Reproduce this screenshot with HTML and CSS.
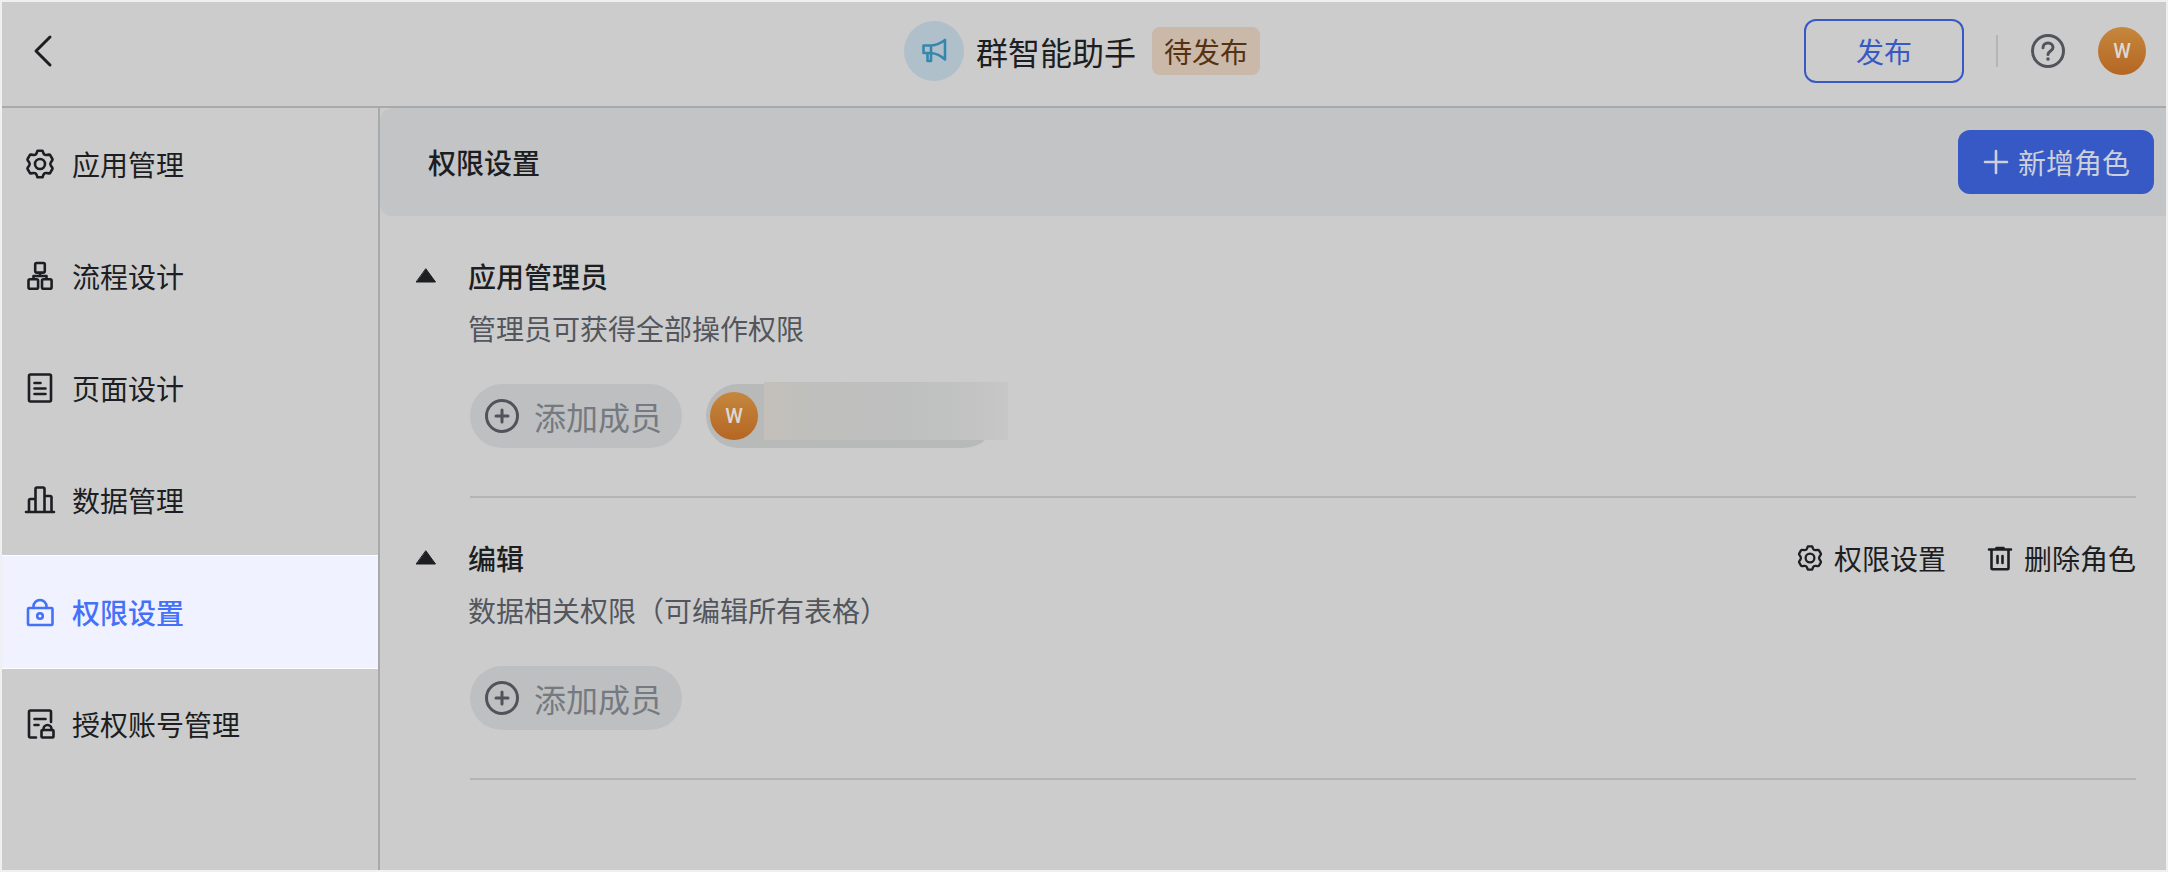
FILE: index.html
```html
<!DOCTYPE html>
<html lang="zh-CN">
<head>
<meta charset="utf-8">
<title>群智能助手</title>
<link rel="stylesheet" href="styles.css">
</head>
<body>
<svg class="sprite" aria-hidden="true">
  <symbol id="gear" viewBox="0 0 28 28">
    <path d="M11.500 .8h5l1 2.600Q18.300 5.200 20.200 5L23 4.600q.8-.1 1.300.7L26.400 9q.4.700-.2 1.500l-1.300 1.800q-1.200 1.700 0 3.400l1.300 1.800q.6.800.2 1.500l-2.100 3.700q-.5.800-1.300.7L20.200 23q-1.900-.2-2.700 1.600l-1 2.600h-5l-1-2.600Q9.700 22.800 7.800 23L5 23.400q-.8.100-1.300-.7L1.600 19q-.4-.7.2-1.500l1.300-1.800q1.200-1.700 0-3.400L1.800 10.500Q1.200 9.700 1.600 9l2.100-3.700q.5-.8 1.300-.7L7.800 5q1.900.2 2.700-1.600z"/>
    <circle cx="14" cy="14" r="5"/>
  </symbol>
  <symbol id="plus-circle" viewBox="0 0 36 36">
    <circle cx="18" cy="18" r="15.500"/><path d="M18 12v12M12 18h12"/>
  </symbol>
</svg>
<div class="app">
  <header class="topbar">
    <button class="back" type="button" aria-label="返回">
      <svg viewBox="0 0 36 36"><path d="M32 4 18 18l14 14"/></svg>
    </button>
    <div class="app-title">
      <span class="app-logo"><svg viewBox="0 0 28 28"><path d="M11 8.500Q18.500 8 25 3v19.500Q18.500 16.500 11 16M11 8.500H3.500V16H11zM7.500 16v8H11v-8"/></svg></span>
      <h1 class="app-name">群智能助手</h1>
      <span class="badge">待发布</span>
    </div>
    <div class="tools">
      <button class="publish" type="button">发布</button>
      <span class="separator"></span>
      <button class="help" type="button" aria-label="帮助">
        <svg viewBox="0 0 36 36"><circle cx="18" cy="18" r="15.500"/><path d="M13 14.800c0-2.900 2-4.800 5-4.800s5 1.900 5 4.400c0 3.600-5 3.600-5 7.100"/><circle class="dot" cx="18" cy="26" r="1.800"/></svg>
      </button>
      <span class="avatar">W</span>
    </div>
  </header>
  <div class="workspace">
    <nav class="sidebar">
      <a class="nav-item" href="#app"><svg viewBox="0 0 28 28"><use href="#gear"/></svg>应用管理</a>
      <a class="nav-item" href="#flow"><svg viewBox="0 0 28 28"><rect x="9.200" y="1" width="9.600" height="9.600" rx="1.500"/><rect x="2.500" y="17.200" width="9.600" height="9.600" rx="1.500"/><rect x="16" y="17.200" width="9.600" height="9.600" rx="1.500"/><path d="M14 11v3M7.500 16.500V14h13v2.500"/></svg>流程设计</a>
      <a class="nav-item" href="#page"><svg viewBox="0 0 28 28"><rect x="3" y="0.500" width="22" height="27" rx="1.500"/><path d="M8.500 9h6M8.500 14.500h11M8.500 20h11"/></svg>页面设计</a>
      <a class="nav-item" href="#data"><svg viewBox="0 0 28 28"><path d="M0 26h28M3 26V14.500q0-1.500 1.500-1.500H9.500M9.500 26V3q0-1.500 1.500-1.500h6q1.500 0 1.500 1.500v23M18.500 10H24q1.500 0 1.500 1.500V26"/></svg>数据管理</a>
      <a class="nav-item active" href="#permission" aria-current="page"><svg viewBox="0 0 28 28"><rect x="2" y="10" width="24.500" height="17" rx="1"/><path d="M7.500 10V8.500a6.500 6.500 0 0 1 13 0V10"/><circle cx="14" cy="18" r="2.800"/></svg>权限设置</a>
      <a class="nav-item" href="#account"><svg viewBox="0 0 28 28"><path d="M25 12V2q0-1.500-1.500-1.500h-19Q3 .5 3 2v24q0 1.500 1.500 1.500H10M8.500 9h11M8.500 15h4"/><rect x="15.500" y="20" width="12" height="7.500" rx="1"/><path d="M17.500 20v-1a4 4 0 0 1 8 0v1"/></svg>授权账号管理</a>
    </nav>
    <main class="content">
      <div class="content-head">
        <h2 class="heading">权限设置</h2>
        <button class="primary" type="button"><svg viewBox="0 0 28 28"><path d="M14 3v22M3 14h22"/></svg>新增角色</button>
      </div>
      <section class="role">
        <div class="role-head">
          <button class="toggle" type="button" aria-label="收起"><svg viewBox="0 0 20 20"><path d="M10 3 19.500 16H.5z"/></svg></button>
          <h3 class="heading">应用管理员</h3>
        </div>
        <p class="role-desc">管理员可获得全部操作权限</p>
        <div class="members">
          <button class="add" type="button"><svg viewBox="0 0 36 36"><use href="#plus-circle"/></svg>添加成员</button>
          <div class="member"><span class="avatar">W</span><span class="mask"></span></div>
        </div>
      </section>
      <section class="role">
        <div class="role-head">
          <button class="toggle" type="button" aria-label="收起"><svg viewBox="0 0 20 20"><path d="M10 3 19.500 16H.5z"/></svg></button>
          <h3 class="heading">编辑</h3>
          <div class="actions">
            <button class="action" type="button"><svg viewBox="-2 -2 32 32"><use href="#gear" width="28" height="28"/></svg>权限设置</button>
            <button class="action" type="button"><svg viewBox="0 0 28 28"><path d="M3 5.500h22M5.500 5.500V24q0 1.200 1.200 1.200h14.600q1.200 0 1.200-1.200V5.500M11.500 12v7M16.500 12v7M10.500 4h7"/></svg>删除角色</button>
          </div>
        </div>
        <p class="role-desc">数据相关权限（可编辑所有表格）</p>
        <div class="members">
          <button class="add" type="button"><svg viewBox="0 0 36 36"><use href="#plus-circle"/></svg>添加成员</button>
        </div>
      </section>
    </main>
  </div>
</div>
</body>
</html>
```
FILE: styles.css
```css
* { box-sizing: border-box; }

body {
  margin: 0;
  min-height: 100vh;
  display: flex;
  background: #f0f0f0;
  color: #1c1e22;
  font: 28px/40px "Noto Sans CJK SC", sans-serif;
}

h1, h2, h3, p { margin: 0; }

button {
  margin: 0;
  padding: 0;
  border: 0;
  background: none;
  color: inherit;
  font: inherit;
  cursor: pointer;
}

svg {
  display: block;
  flex: none;
  width: 28px;
  height: 28px;
  fill: none;
  stroke: currentColor;
  stroke-width: 2.6;
  stroke-linecap: round;
  stroke-linejoin: round;
  overflow: visible;
}

.sprite { position: absolute; width: 0; height: 0; }
symbol { overflow: visible; }

.app {
  flex: 1;
  margin: 2px;
  display: flex;
  flex-direction: column;
  background: #ccc;
}

.topbar {
  display: grid;
  grid-template-columns: 1fr auto 1fr;
  align-items: center;
  padding: 17px 20px 23px 16px;
  border-bottom: 2px solid #a8a9aa;
}

.back { justify-self: start; }
.back svg { width: 36px; height: 36px; }

.app-title { display: flex; align-items: center; }

.app-logo {
  display: grid;
  place-items: center;
  width: 60px;
  height: 60px;
  margin-right: 12px;
  border-radius: 50%;
  background: #b0c0ca;
  color: #3787ad;
}

.app-name { font-size: 32px; font-weight: 400; }

.badge {
  margin-left: 16px;
  padding: 4px 12px;
  border-radius: 8px;
  background: #cab8a9;
  color: #573211;
}

.tools {
  display: flex;
  justify-content: flex-end;
  align-items: center;
  gap: 32px;
}

.publish {
  width: 160px;
  height: 64px;
  border: 2px solid #3759c5;
  border-radius: 12px;
  color: #3759c5;
}

.separator { width: 2px; height: 32px; background: #b4b5b7; }

.help { color: #51545a; }

.back svg, .help svg, .add svg {
  width: 36px;
  height: 36px;
  stroke-width: 3;
}

.help .dot { fill: currentColor; stroke: none; }

.avatar {
  width: 48px;
  height: 48px;
  border-radius: 50%;
  background: linear-gradient(#c5873d, #b56623);
  color: #dcd8d3;
  font: 500 20px/48px Roboto, sans-serif;
  text-align: center;
}

.workspace { flex: 1; display: flex; }

.sidebar {
  flex: none;
  width: 378px;
  border-right: 2px solid #a8a9aa;
}

.nav-item {
  display: flex;
  align-items: center;
  gap: 18px;
  height: 112px;
  padding-left: 24px;
  color: inherit;
  text-decoration: none;
}

.nav-item.active {
  background: #f0f3ff;
  box-shadow: 0 -1px #fff, 0 1px #fff;
  color: #4571f8;
  font-weight: 500;
}

.content { flex: 1; }

.content-head {
  display: flex;
  align-items: center;
  justify-content: space-between;
  padding: 22px 12px 22px 48px;
  border-radius: 12px 0 0 12px;
  background: #c3c4c6;
}

.heading { font-size: 28px; font-weight: 500; }

.primary {
  display: flex;
  align-items: center;
  gap: 8px;
  height: 64px;
  padding: 0 24px;
  border-radius: 12px;
  background: #3759c5;
  color: #ccd0dc;
}

.role { padding: 40px 30px 0 36px; }

.role-head { display: flex; align-items: center; gap: 32px; }

.toggle svg { width: 20px; height: 20px; fill: currentColor; stroke-width: 1; }

.actions { display: flex; gap: 40px; margin-left: auto; }

.action { display: flex; align-items: center; gap: 10px; }

.role-desc { margin: 12px 0 0 52px; color: #53565c; }

.members {
  display: flex;
  gap: 24px;
  margin: 36px 0 0 54px;
  padding-bottom: 48px;
  border-bottom: 2px solid #b4b5b7;
}

.add {
  display: flex;
  align-items: center;
  gap: 14px;
  height: 64px;
  padding: 0 20px 0 14px;
  border-radius: 32px;
  background: #bdbfc1;
  color: #757980;
  font-size: 32px;
}

.add svg { color: #51535b; }

.member {
  position: relative;
  display: flex;
  align-items: center;
  width: 290px;
  height: 64px;
  padding-left: 4px;
  border-radius: 32px;
  background: #b8bab9;
}

.mask {
  position: absolute;
  top: -2px;
  left: 58px;
  width: 244px;
  height: 58px;
  background: linear-gradient(90deg, #c4bfbb, #bfbfbd 20%, #bebfbf 60%, #c3c3c3 85%, #c7c7c7);
}
```
